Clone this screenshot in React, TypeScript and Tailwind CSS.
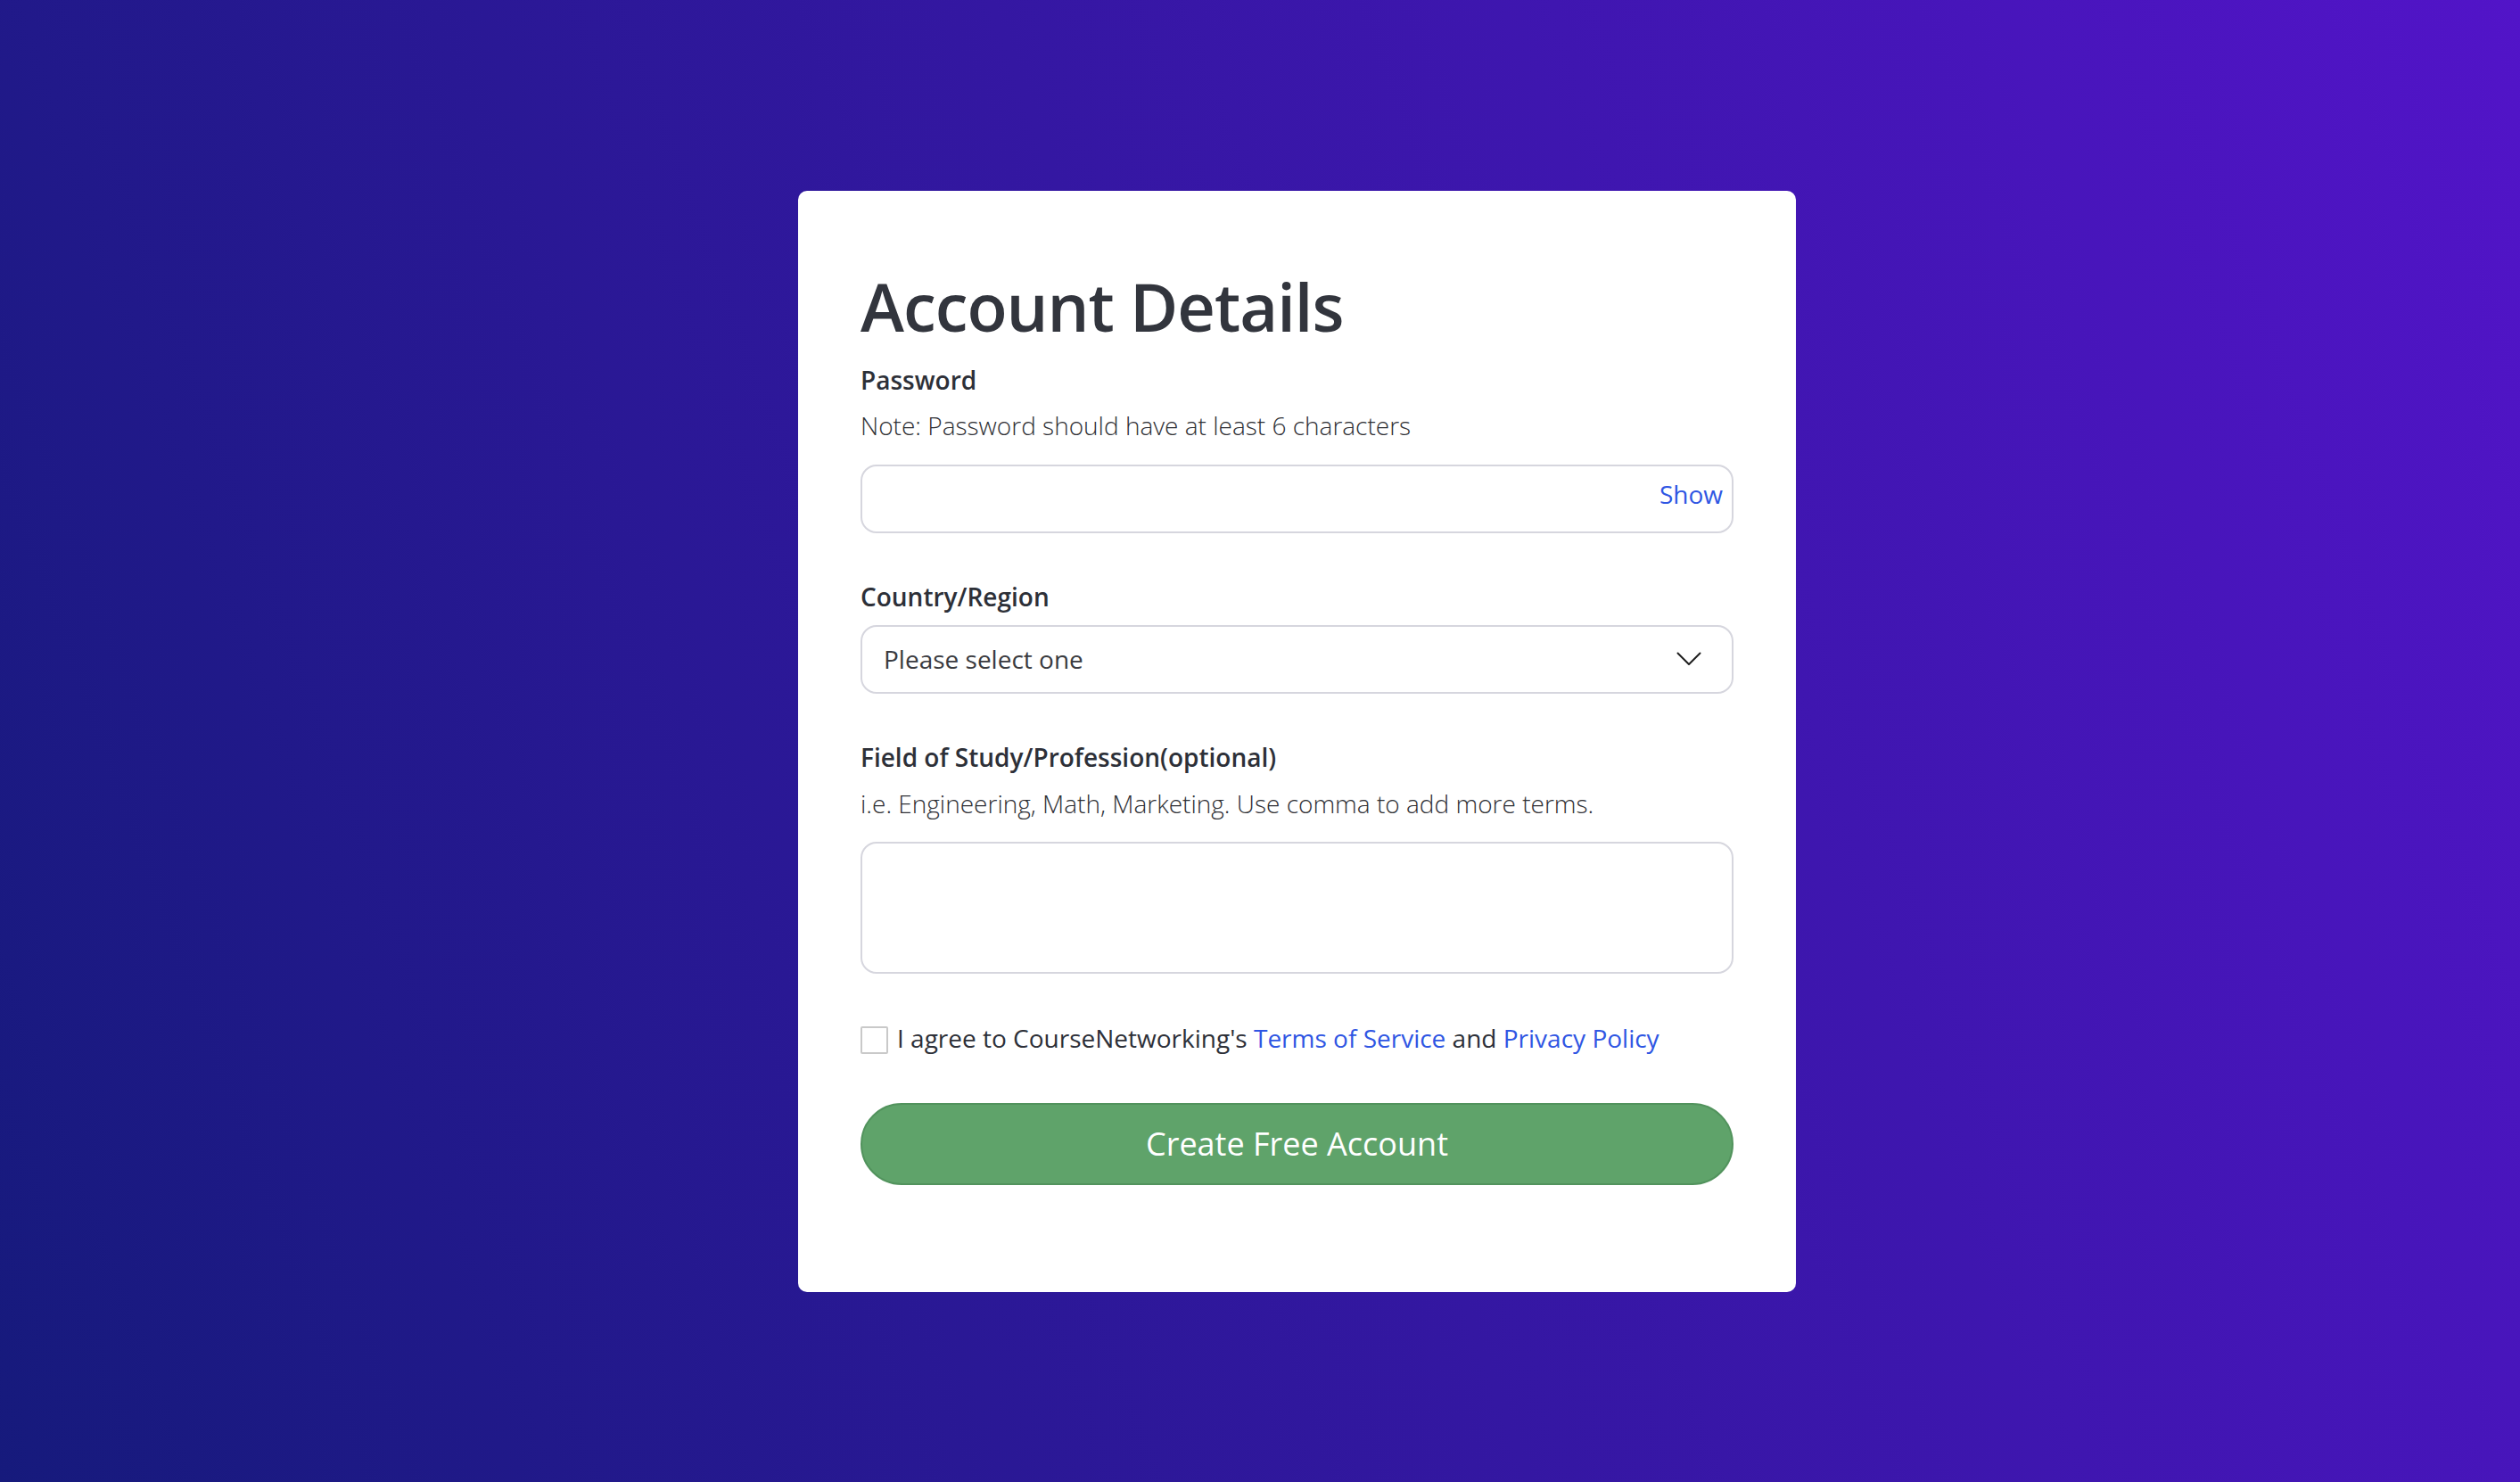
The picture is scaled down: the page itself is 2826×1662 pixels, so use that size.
import { useState } from 'react';

const Chevron = () => (
  <svg width="28" height="16" viewBox="0 0 28 16" fill="none" className="shrink-0">
    <path d="M1.5 1.5 L14 14 L26.5 1.5" stroke="#1f1f1f" strokeWidth="2" strokeLinecap="round" strokeLinejoin="round" />
  </svg>
);

export default function App() {
  const [showPassword, setShowPassword] = useState(false);
  const [agreed, setAgreed] = useState(false);

  return (
    <div className="min-h-screen w-full flex items-center justify-center pl-[83px] bg-[linear-gradient(70deg,#161a7c,#5214c8)] font-['Open_Sans',sans-serif]">
      <div className="w-[1119px] bg-white rounded-[10px] px-[70px] pt-[84px] pb-[120px]">
        <h1 className="text-[74px] leading-[91px] font-semibold text-[#32353d] tracking-[-1px]">Account Details</h1>

        <label className="block mt-[18px] text-[28px] leading-[38px] font-semibold text-[#2d3038]">Password</label>
        <p className="mt-[13px] text-[28px] leading-[38px] font-light text-[#2f3035]">
          Note: Password should have at least 6 characters
        </p>
        <div className="mt-[25px] h-[77px] flex items-center border-2 border-[#d6d6de] rounded-[18px] pl-[26px] pr-[10px]">
          <input
            type={showPassword ? 'text' : 'password'}
            className="flex-1 h-full bg-transparent outline-none text-[28px] text-[#333]"
          />
          <button
            type="button"
            onClick={() => setShowPassword(!showPassword)}
            className="text-[28px] leading-[38px] text-[#2f56e3] -mt-[10px]"
          >
            Show
          </button>
        </div>

        <label className="block mt-[52px] text-[28px] leading-[38px] font-semibold text-[#2d3038]">Country/Region</label>
        <div className="mt-[13px] h-[77px] flex items-center justify-between border-2 border-[#d6d6de] rounded-[18px] pl-[24px] pr-[34px]">
          <span className="text-[28px] leading-[38px] text-[#3a3b40]">Please select one</span>
          <Chevron />
        </div>

        <label className="block mt-[52px] text-[28px] leading-[38px] font-semibold text-[#2d3038]">
          Field of Study/Profession(optional)
        </label>
        <p className="mt-[14px] text-[28px] leading-[38px] font-light text-[#2f3035]">
          i.e. Engineering, Math, Marketing. Use comma to add more terms.
        </p>
        <textarea className="block mt-[24px] w-full h-[148px] resize-none border-2 border-[#d6d6de] rounded-[18px] outline-none px-[24px] py-[16px] text-[28px]" />

        <div className="mt-[53px] flex items-center gap-[10px]">
          <button
            type="button"
            onClick={() => setAgreed(!agreed)}
            className="w-[31px] h-[31px] shrink-0 border-2 border-[#c9c9c9] rounded-[2px] bg-white mt-[6px]"
          >
            {agreed && <span className="block w-full h-full bg-[#2f56e3]" />}
          </button>
          <p className="text-[28px] leading-[38px] text-[#2d3038]">
            I agree to CourseNetworking's <a className="text-[#2f56e3]">Terms of Service</a> and{' '}
            <a className="text-[#2f56e3]">Privacy Policy</a>
          </p>
        </div>

        <button
          type="button"
          className="mt-[54px] w-full h-[92px] rounded-full bg-[#5fa36a] border-2 border-[#52935d] text-white text-[36px] leading-[44px]"
        >
          Create Free Account
        </button>
      </div>
    </div>
  );
}
